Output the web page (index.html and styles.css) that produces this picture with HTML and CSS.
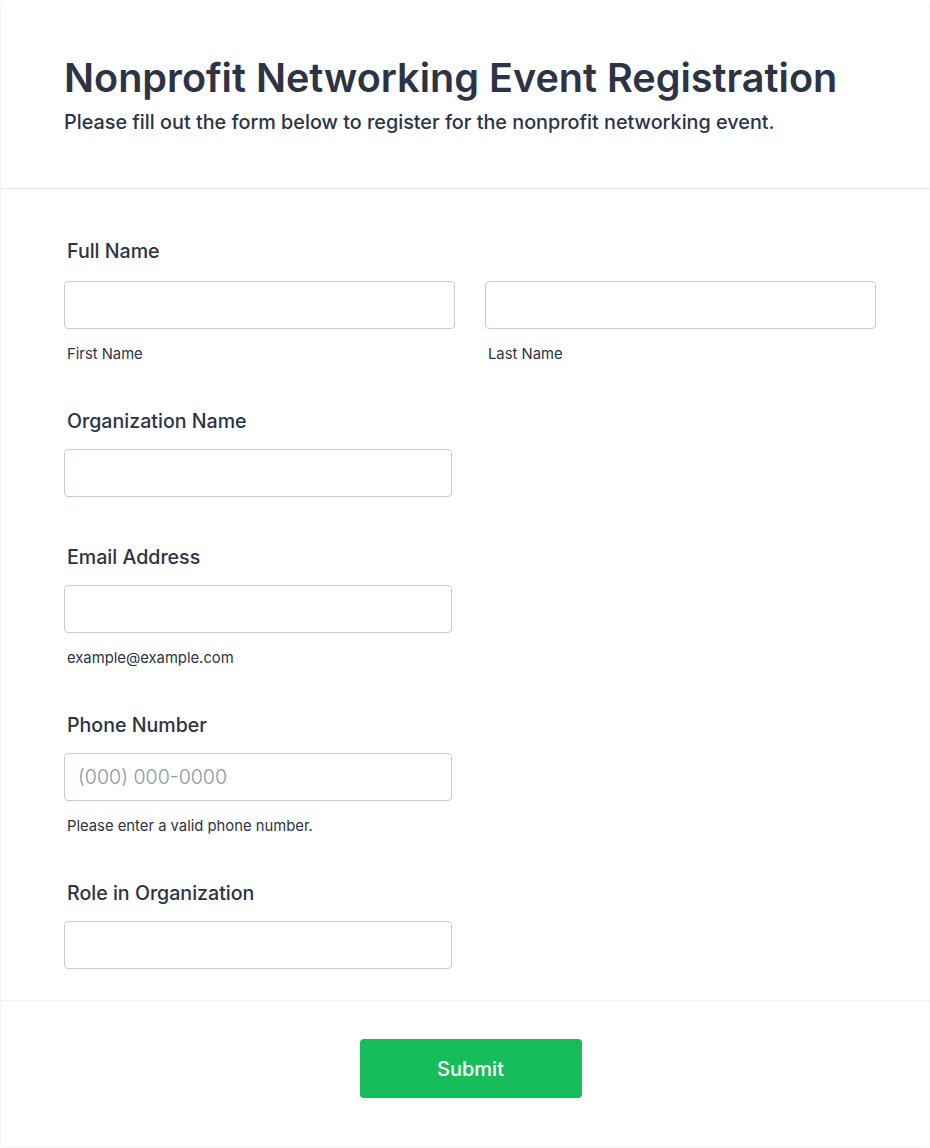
FILE: index.html
```html
<!DOCTYPE html>
<html lang="en">
<head>
    <meta charset="UTF-8">
    <meta name="viewport" content="width=device-width, initial-scale=1.0">
    <title>Nonprofit Networking Event Registration</title>
    <link rel="stylesheet" href="styles.css">
</head>
<body>
    <form class="form-card">
        <header class="form-header">
            <h1>Nonprofit Networking Event Registration</h1>
            <p>Please fill out the form below to register for the nonprofit networking event.</p>
        </header>

        <ul class="form-fields">
            <li class="field field-name">
                <label class="field-label">Full Name</label>
                <div class="name-row">
                    <div class="name-col">
                        <input type="text" id="first_name">
                        <span class="sublabel">First Name</span>
                    </div>
                    <div class="name-col">
                        <input type="text" id="last_name">
                        <span class="sublabel">Last Name</span>
                    </div>
                </div>
            </li>
            <li class="field">
                <label class="field-label" for="org">Organization Name</label>
                <input type="text" id="org" class="single">
            </li>
            <li class="field">
                <label class="field-label" for="email">Email Address</label>
                <input type="email" id="email" class="single">
                <span class="sublabel">example@example.com</span>
            </li>
            <li class="field">
                <label class="field-label" for="phone">Phone Number</label>
                <input type="tel" id="phone" class="single" placeholder="(000) 000-0000">
                <span class="sublabel">Please enter a valid phone number.</span>
            </li>
            <li class="field">
                <label class="field-label" for="role">Role in Organization</label>
                <input type="text" id="role" class="single">
            </li>
        </ul>

        <div class="form-footer">
            <button type="submit" class="submit-btn">Submit</button>
        </div>
    </form>
</body>
</html>
```

FILE: styles.css
```css
* {
    margin: 0;
    padding: 0;
    box-sizing: border-box;
}
body {
    background: #fff;
    color: #2c3345;
    font-family: Inter, "Noto Sans", sans-serif;
}
.form-card {
    display: flex;
    flex-direction: column;
    width: 930px;
    min-height: 1148px;
    background: #fff;
    border: 1px solid #f3f3fe;
    border-top: none;
    border-radius: 6px;
}
.form-header {
    padding: 54px 63px 52px;
    border-bottom: 1px solid #e3e5ef;
}
.form-header h1 {
    font-size: 39.6px;
    font-weight: 600;
    line-height: 48px;
    margin-bottom: 7px;
}
.form-header p {
    font-size: 19.8px;
    font-weight: 500;
    line-height: 27px;
}
.form-fields {
    list-style: none;
    display: flex;
    flex-direction: column;
    gap: 47px;
    padding: 49px 54px 31px 63px;
}
.field {
    display: flex;
    flex-direction: column;
}
.field-label {
    font-size: 19.6px;
    font-weight: 500;
    line-height: 27px;
    padding-left: 3px;
    margin-bottom: 14px;
}
.field-name .field-label {
    margin-bottom: 16px;
}
.name-row {
    display: grid;
    grid-template-columns: 391px 391px;
    gap: 30px;
}
.name-col {
    display: flex;
    flex-direction: column;
}
input {
    height: 48px;
    width: 100%;
    border: 1px solid #c3cad8;
    border-radius: 4px;
    background: #fff;
    padding: 0 13px;
    font-family: inherit;
    font-size: 19.6px;
    font-weight: 300;
    color: #2c3345;
}
input.single {
    width: 388px;
}
input::placeholder {
    color: #8d96a8;
}
.sublabel {
    font-size: 14.8px;
    line-height: 14px;
    margin-top: 18px;
    padding-left: 3px;
}
.form-footer {
    border-top: 1px solid #f1f2f8;
    display: flex;
    justify-content: center;
    padding: 38px 0 48px 11px;
}
.submit-btn {
    width: 222px;
    height: 59px;
    background: #18bd5b;
    color: #fff;
    border: none;
    border-radius: 4px;
    font-family: inherit;
    font-size: 20px;
    font-weight: 500;
    cursor: pointer;
}
```
